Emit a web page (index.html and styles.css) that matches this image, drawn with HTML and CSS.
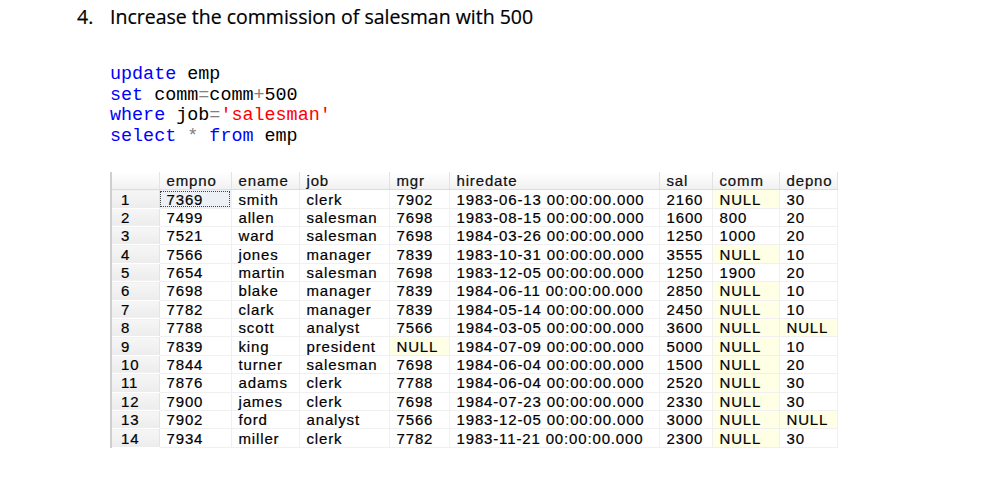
FILE: index.html
```html
<!DOCTYPE html>
<html>
<head>
<meta charset="utf-8">
<link rel="stylesheet" href="styles.css">
</head>
<body>
<h1 class="task"><span class="num">4.</span><span class="title">Increase the commission of salesman with 500</span></h1>
<pre class="code"><span class="kw">update</span> emp
<span class="kw">set</span> comm<span class="op">=</span>comm<span class="op">+</span>500
<span class="kw">where</span> job<span class="op">=</span><span class="str">'salesman'</span>
<span class="kw">select</span> <span class="op">*</span> <span class="kw">from</span> emp</pre>
<table class="grid">
<thead>
<tr><th class="rn"></th><th class="c-empno">empno</th><th class="c-ename">ename</th><th class="c-job">job</th><th class="c-mgr">mgr</th><th class="c-hire">hiredate</th><th class="c-sal">sal</th><th class="c-comm">comm</th><th class="c-dep">depno</th></tr>
</thead>
<tbody>
<tr><td class="rn">1</td><td class="focus">7369</td><td>smith</td><td>clerk</td><td>7902</td><td>1983-06-13 00:00:00.000</td><td>2160</td><td class="null">NULL</td><td>30</td></tr>
<tr><td class="rn">2</td><td>7499</td><td>allen</td><td>salesman</td><td>7698</td><td>1983-08-15 00:00:00.000</td><td>1600</td><td>800</td><td>20</td></tr>
<tr><td class="rn">3</td><td>7521</td><td>ward</td><td>salesman</td><td>7698</td><td>1984-03-26 00:00:00.000</td><td>1250</td><td>1000</td><td>20</td></tr>
<tr><td class="rn">4</td><td>7566</td><td>jones</td><td>manager</td><td>7839</td><td>1983-10-31 00:00:00.000</td><td>3555</td><td class="null">NULL</td><td>10</td></tr>
<tr><td class="rn">5</td><td>7654</td><td>martin</td><td>salesman</td><td>7698</td><td>1983-12-05 00:00:00.000</td><td>1250</td><td>1900</td><td>20</td></tr>
<tr><td class="rn">6</td><td>7698</td><td>blake</td><td>manager</td><td>7839</td><td>1984-06-11 00:00:00.000</td><td>2850</td><td class="null">NULL</td><td>10</td></tr>
<tr><td class="rn">7</td><td>7782</td><td>clark</td><td>manager</td><td>7839</td><td>1984-05-14 00:00:00.000</td><td>2450</td><td class="null">NULL</td><td>10</td></tr>
<tr><td class="rn">8</td><td>7788</td><td>scott</td><td>analyst</td><td>7566</td><td>1984-03-05 00:00:00.000</td><td>3600</td><td class="null">NULL</td><td class="null">NULL</td></tr>
<tr><td class="rn">9</td><td>7839</td><td>king</td><td>president</td><td class="null">NULL</td><td>1984-07-09 00:00:00.000</td><td>5000</td><td class="null">NULL</td><td>10</td></tr>
<tr><td class="rn">10</td><td>7844</td><td>turner</td><td>salesman</td><td>7698</td><td>1984-06-04 00:00:00.000</td><td>1500</td><td class="null">NULL</td><td>20</td></tr>
<tr><td class="rn">11</td><td>7876</td><td>adams</td><td>clerk</td><td>7788</td><td>1984-06-04 00:00:00.000</td><td>2520</td><td class="null">NULL</td><td>30</td></tr>
<tr><td class="rn">12</td><td>7900</td><td>james</td><td>clerk</td><td>7698</td><td>1984-07-23 00:00:00.000</td><td>2330</td><td class="null">NULL</td><td>30</td></tr>
<tr><td class="rn">13</td><td>7902</td><td>ford</td><td>analyst</td><td>7566</td><td>1983-12-05 00:00:00.000</td><td>3000</td><td class="null">NULL</td><td class="null">NULL</td></tr>
<tr><td class="rn">14</td><td>7934</td><td>miller</td><td>clerk</td><td>7782</td><td>1983-11-21 00:00:00.000</td><td>2300</td><td class="null">NULL</td><td>30</td></tr>
</tbody>
</table>
</body>
</html>
```
FILE: styles.css
```css
html, body {
  margin: 0;
  padding: 0;
  background: #ffffff;
}
body {
  width: 991px;
  height: 480px;
  overflow: hidden;
}
.task {
  margin: 0;
  padding: 4px 0 0 77px;
  font-family: "Open Sans", "Liberation Sans", sans-serif;
  font-weight: normal;
  font-size: 19.5px;
  line-height: 26px;
  color: #000;
  display: flex;
  -webkit-text-stroke: 0.2px #000;
}
.task .num {
  width: 33px;
}
.code {
  margin: 35px 0 0 110px;
  font-family: "Liberation Mono", "Courier New", monospace;
  font-size: 18.4px;
  line-height: 20.7px;
  color: #000;
}
.kw { color: #0000ff; }
.op { color: #808080; }
.str { color: #ff0000; }
.grid {
  margin: 24px 0 0 110px;
  border-collapse: collapse;
  border-left: 2px solid #cfcfcf;
  font-family: "Liberation Sans", Arial, sans-serif;
  font-size: 15px;
  letter-spacing: 0.85px;
  color: #000;
  table-layout: fixed;
  -webkit-text-stroke: 0.2px #000;
}
.grid th, .grid td {
  padding: 0 0 0 7px;
  text-align: left;
  white-space: nowrap;
  overflow: hidden;
  height: 18.4px;
  line-height: 17px;
  box-sizing: border-box;
}
.grid th {
  font-weight: normal;
  height: 18px;
  background: linear-gradient(#ffffff, #f1f1f1);
  border-right: 1px solid #e2e2e2;
  border-bottom: 1px solid #dcdcdc;
  color: #111;
}
.grid td {
  border-right: 1px solid #f0f0f0;
  border-bottom: 1px solid #f0f0f0;
}
.grid .rn {
  width: 48px;
  padding-left: 9px;
  background: linear-gradient(#f6f6f6, #ececec);
  border-right: 1px solid #e4e4e4;
  border-bottom: 1px solid #ffffff;
}
.grid thead .rn {
  background: linear-gradient(#ffffff, #f1f1f1);
  border-bottom: 1px solid #dcdcdc;
}
.c-empno { width: 72px; }
.c-ename { width: 68px; }
.c-job { width: 90px; }
.c-mgr { width: 60px; }
.c-hire { width: 210px; }
.c-sal { width: 53px; }
.c-comm { width: 67px; }
.c-dep { width: 58px; }
.grid td.null {
  background: #ffffe6;
}
.grid td.focus {
  background: #edf1f5;
  outline: 1px dotted #444;
  outline-offset: -2px;
}
```
